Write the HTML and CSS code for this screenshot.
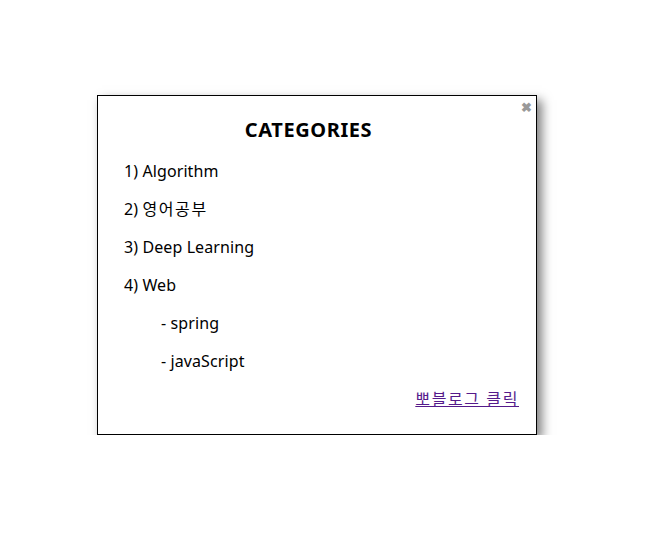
FILE: index.html
```html
<!DOCTYPE html>
<html lang="ko">
<head>
<meta charset="utf-8">
<link rel="stylesheet" href="styles.css">
</head>
<body>
<div class="popup">
  <span class="close">&#x2716;</span>
  <h2 class="title">CATEGORIES</h2>
  <ul class="list">
    <li>1) Algorithm</li>
    <li>2) <span class="ko">영어공부</span></li>
    <li>3) Deep Learning</li>
    <li>4) Web</li>
    <li class="sub">- spring</li>
    <li class="sub">- javaScript</li>
  </ul>
  <div class="foot"><a href="#" class="link ko">뽀블로그 클릭</a></div>
</div>
</body>
</html>
```
FILE: styles.css
```css
html, body {
  margin: 0;
  padding: 0;
  background: #fff;
}
body {
  font-family: "Noto Sans", "Noto Sans CJK KR", sans-serif;
  color: #000;
}
.popup {
  position: relative;
  box-sizing: border-box;
  margin: 95px 0 0 97px;
  width: 440px;
  height: 340px;
  border: 1px solid #000;
  background: #fff;
  box-shadow: 5px 5px 10px rgba(0,0,0,0.5);
  padding: 20px 16px 0 26px;
}
.close {
  position: absolute;
  top: 2px;
  right: 4px;
  font-size: 13px;
  color: #999;
  font-weight: bold;
}
.title {
  margin: 0;
  text-align: center;
  font-size: 20px;
  font-weight: bold;
  line-height: 28px;
  padding-right: 27px;
  letter-spacing: 0.6px;
}
.list {
  list-style: none;
  margin: 16px 0 0;
  padding: 0;
}
.list li {
  font-size: 16px;
  line-height: 22px;
  height: 22px;
  margin-bottom: 16px;
  letter-spacing: 0.1px;
}
.list li.sub {
  padding-left: 37px;
}
.ko {
  letter-spacing: 1.6px;
}
.foot {
  text-align: right;
  margin-top: 1px;
}
.link {
  font-size: 16px;
  line-height: 22px;
  color: #551a8b;
  margin-right: 1px;
}
```
